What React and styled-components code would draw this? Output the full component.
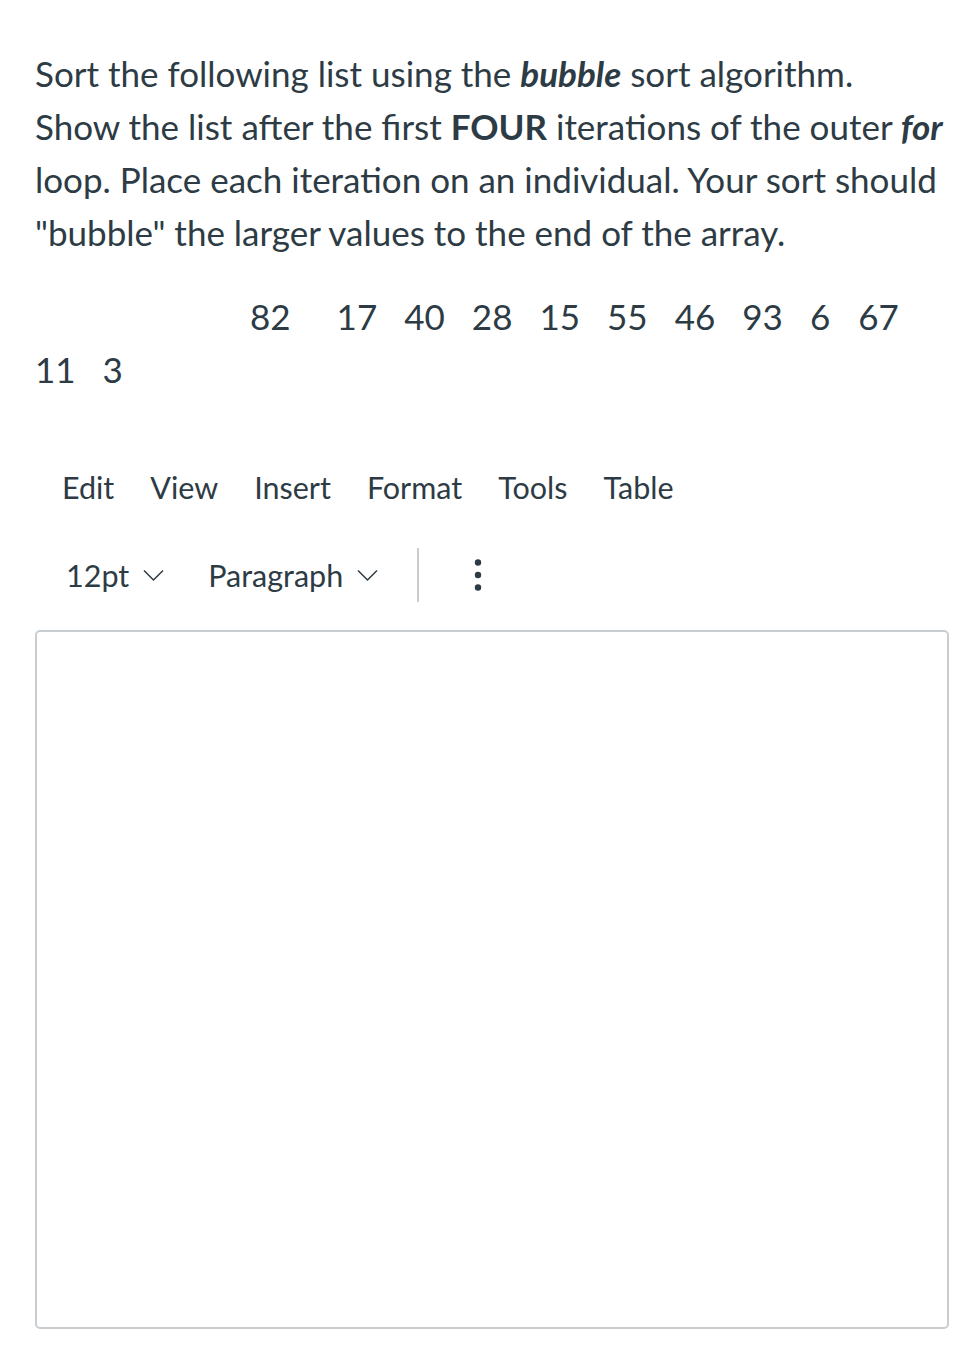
import styled, { createGlobalStyle } from "styled-components";

const GlobalStyle = createGlobalStyle`
  body {
    margin: 0;
    background: #ffffff;
    font-family: Lato, "Noto Sans", sans-serif;
    color: #2d3b45;
  }
`

const SWrapper = styled.div`
  display: flex;
  flex-direction: column;
  padding: 47px 19px 0 35px;
`

const SQuestion = styled.p`
  margin: 0;
  margin-right: -10px;
  font-size: 35px;
  line-height: 53px;
  white-space: nowrap;
`

const SNumbers = styled.p`
  margin: 31px 0 0;
  font-size: 35px;
  line-height: 53px;
`

const SNum = styled.span`
  display: inline-block;
  margin-left: ${({ $lead }) => $lead || 0}px;
  margin-right: ${({ $gap }) => $gap}px;
`

const SMenuBar = styled.div`
  display: flex;
  align-items: center;
  gap: 36px;
  margin-top: 71px;
  padding-left: 27px;
  font-size: 30.5px;
  line-height: 40px;
`

const SMenuItem = styled.span`
  cursor: default;
`

const SToolbar = styled.div`
  display: flex;
  align-items: center;
  height: 56px;
  margin-top: 40px;
  padding-left: 31px;
  font-size: 30.5px;
`

const SSelect = styled.div`
  display: flex;
  align-items: center;
  gap: 14px;
  margin-right: ${({ $space }) => $space}px;
`

const SDivider = styled.div`
  width: 2px;
  height: 54px;
  background-color: #c7cdd1;
  margin-right: 54px;
`

const SEditor = styled.div`
  height: 699px;
  margin-top: 27px;
  border: 2px solid #c7cdd1;
  border-radius: 5px;
  box-sizing: border-box;
`

const Chevron = () => (
  <svg width="21" height="13" viewBox="0 0 21 13" fill="none">
    <path d="M1 1.5 L10.5 11 L20 1.5" stroke="#2d3b45" strokeWidth="1.5" />
  </svg>
)

const Dots = () => (
  <svg width="10" height="32" viewBox="0 0 10 32">
    <circle cx="5" cy="3.5" r="3.2" fill="#2d3b45" />
    <circle cx="5" cy="16" r="3.2" fill="#2d3b45" />
    <circle cx="5" cy="28.5" r="3.2" fill="#2d3b45" />
  </svg>
)

const numbers = [
  ["82", 46, 215], ["17", 27], ["40", 27], ["28", 27], ["15", 27], ["55", 27],
  ["46", 27], ["93", 27], ["6", 28], ["67", 27], ["11", 27], ["3", 0],
]

const App = () => {
  return (
    <SWrapper>
      <GlobalStyle />
      <SQuestion>
        Sort the following list using the <b><i>bubble</i></b> sort algorithm.<br />
        Show the list after the first <b>FOUR</b> iterations of the outer <b><i>for</i></b><br />
        loop. Place each iteration on an individual. Your sort should<br />
        "bubble" the larger values to the end of the array.
      </SQuestion>
      <SNumbers>
        {numbers.map(([n, gap, lead], i) => (
          <SNum key={i} $gap={gap} $lead={lead}>{n}</SNum>
        ))}
      </SNumbers>
      <SMenuBar>
        <SMenuItem>Edit</SMenuItem>
        <SMenuItem>View</SMenuItem>
        <SMenuItem>Insert</SMenuItem>
        <SMenuItem>Format</SMenuItem>
        <SMenuItem>Tools</SMenuItem>
        <SMenuItem>Table</SMenuItem>
      </SMenuBar>
      <SToolbar>
        <SSelect $space={44}>12pt <Chevron /></SSelect>
        <SSelect $space={39}>Paragraph <Chevron /></SSelect>
        <SDivider />
        <Dots />
      </SToolbar>
      <SEditor />
    </SWrapper>
  )
}

export default App;
